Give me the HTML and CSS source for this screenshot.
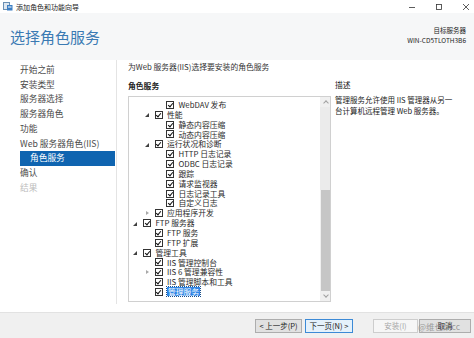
FILE: index.html
```html
<!DOCTYPE html>
<html lang="zh-CN">
<head>
<meta charset="utf-8">
<title>添加角色和功能向导</title>
<link rel="stylesheet" href="styles.css">
</head>
<body>
<div class="window">
  <div class="titlebar">
    <svg class="app-icon" width="10" height="9" viewBox="0 0 10 9">
      <rect x="0.5" y="0.5" width="6" height="7" fill="#dfe7ef" stroke="#6a8fb3"/>
      <rect x="4" y="3" width="5.5" height="5.5" fill="#3c7fc4"/>
      <rect x="5" y="4.5" width="3.5" height="1" fill="#fff"/>
    </svg>
    <span class="title">添加角色和功能向导</span>
    <div class="controls">
      <svg width="8" height="8" viewBox="0 0 8 8"><line x1="1" y1="4.5" x2="7" y2="4.5" stroke="#333" stroke-width="0.8"/></svg>
      <svg width="8" height="8" viewBox="0 0 8 8"><rect x="1.5" y="1.5" width="5" height="5" fill="none" stroke="#333" stroke-width="0.8"/></svg>
      <svg width="8" height="8" viewBox="0 0 8 8"><path d="M1 1 L7 7 M7 1 L1 7" stroke="#333" stroke-width="0.8"/></svg>
    </div>
  </div>

  <div class="header">
    <h1 class="heading">选择角色服务</h1>
    <div class="target">
      <div>目标服务器</div>
      <div>WIN-CD5TLOTH3B6</div>
    </div>
  </div>

  <div class="main">
    <nav class="nav">
      <div class="nav-item">开始之前</div>
      <div class="nav-item">安装类型</div>
      <div class="nav-item">服务器选择</div>
      <div class="nav-item">服务器角色</div>
      <div class="nav-item">功能</div>
      <div class="nav-item">Web 服务器角色(IIS)</div>
      <div class="nav-item sub active">角色服务</div>
      <div class="nav-item">确认</div>
      <div class="nav-item disabled">结果</div>
    </nav>

    <section class="content">
      <div class="subtitle">为Web 服务器(IIS)选择要安装的角色服务</div>
      <div class="section-label">角色服务</div>
      <div class="tree-box">
        <div class="tree">
          <div class="row l3"><span class="exp"></span><span class="cb"></span><span class="label">WebDAV 发布</span></div>
          <div class="row l2"><span class="exp open"></span><span class="cb"></span><span class="label">性能</span></div>
          <div class="row l3"><span class="exp"></span><span class="cb"></span><span class="label">静态内容压缩</span></div>
          <div class="row l3"><span class="exp"></span><span class="cb"></span><span class="label">动态内容压缩</span></div>
          <div class="row l2"><span class="exp open"></span><span class="cb"></span><span class="label">运行状况和诊断</span></div>
          <div class="row l3"><span class="exp"></span><span class="cb"></span><span class="label">HTTP 日志记录</span></div>
          <div class="row l3"><span class="exp"></span><span class="cb"></span><span class="label">ODBC 日志记录</span></div>
          <div class="row l3"><span class="exp"></span><span class="cb"></span><span class="label">跟踪</span></div>
          <div class="row l3"><span class="exp"></span><span class="cb"></span><span class="label">请求监视器</span></div>
          <div class="row l3"><span class="exp"></span><span class="cb"></span><span class="label">日志记录工具</span></div>
          <div class="row l3"><span class="exp"></span><span class="cb"></span><span class="label">自定义日志</span></div>
          <div class="row l2"><span class="exp closed"></span><span class="cb"></span><span class="label">应用程序开发</span></div>
          <div class="row l1"><span class="exp open"></span><span class="cb"></span><span class="label">FTP 服务器</span></div>
          <div class="row l2"><span class="exp"></span><span class="cb"></span><span class="label">FTP 服务</span></div>
          <div class="row l2"><span class="exp"></span><span class="cb"></span><span class="label">FTP 扩展</span></div>
          <div class="row l1"><span class="exp open"></span><span class="cb"></span><span class="label">管理工具</span></div>
          <div class="row l2"><span class="exp"></span><span class="cb"></span><span class="label">IIS 管理控制台</span></div>
          <div class="row l2"><span class="exp closed"></span><span class="cb"></span><span class="label">IIS 6 管理兼容性</span></div>
          <div class="row l2"><span class="exp"></span><span class="cb"></span><span class="label">IIS 管理脚本和工具</span></div>
          <div class="row l2"><span class="exp"></span><span class="cb"></span><span class="label selected">管理服务</span></div>
        </div>
        <div class="scrollbar">
          <div class="arrow up"></div>
          <div class="track"></div>
          <div class="thumb"></div>
          <div class="arrow down"></div>
        </div>
      </div>
    </section>

    <aside class="desc">
      <div class="desc-title">描述</div>
      <p class="desc-text">管理服务允许使用 IIS 管理器从另一台计算机远程管理 Web 服务器。</p>
    </aside>
  </div>

  <div class="footer">
    <button class="btn">&lt; 上一步(P)</button>
    <button class="btn primary">下一页(N) &gt;</button>
    <button class="btn disabled install">安装(I)</button>
    <button class="btn cancel">取消</button>
    <span class="watermark">@维也纳cc</span>
  </div>
</div>
</body>
</html>
```

FILE: styles.css
```css
* { box-sizing: border-box; }

html, body {
  margin: 0;
  padding: 0;
  width: 474px;
  height: 338px;
  overflow: hidden;
  background: #fff;
  font-family: "Noto Sans CJK SC", "Noto Sans", sans-serif;
  color: #2b2b2b;
}

.window {
  display: flex;
  flex-direction: column;
  width: 474px;
  height: 338px;
  position: relative;
}

/* title bar */
.titlebar {
  height: 13px;
  display: flex;
  align-items: center;
  background: #fff;
  padding-left: 3px;
}
.app-icon { flex: none; }
.title {
  font-size: 7px;
  line-height: 10px;
  margin-left: 3px;
  color: #222;
}
.controls {
  margin-left: auto;
  display: flex;
  gap: 19px;
  padding-right: 4px;
  padding-top: 1px;
}

/* header */
.header {
  height: 47px;
  background: #f6f7f8;
  display: flex;
  justify-content: space-between;
  padding: 0 8px 0 10px;
}
.heading {
  margin: 0;
  margin-top: 14px;
  font-size: 15px;
  line-height: 20px;
  font-weight: normal;
  color: #3a7ab3;
}
.target {
  margin-top: 12px;
  text-align: right;
  font-size: 6.5px;
  line-height: 10px;
  color: #222;
}

/* main */
.main {
  flex: 1;
  display: flex;
  min-height: 0;
}

.nav {
  width: 117px;
  flex: none;
  border-right: 1px solid #e4e4e4;
  padding-top: 3px;
  margin-bottom: 8px;
}
.nav-item {
  font-size: 8.7px;
  line-height: 14.7px;
  padding-left: 20px;
  color: #4a4a4a;
  white-space: nowrap;
}
.nav-item.sub {
  margin-left: 20px;
  padding-left: 10px;
}
.nav-item.active {
  background: #0f64b0;
  color: #fff;
  margin-right: 1px;
}
.nav-item.disabled { color: #bcbcbc; }

.content {
  width: 214px;
  flex: none;
  padding-left: 11px;
  display: flex;
  flex-direction: column;
}
.subtitle {
  font-size: 7.8px;
  line-height: 10px;
  margin-top: 2px;
  color: #333;
  white-space: nowrap;
}
.section-label {
  font-size: 7.8px;
  line-height: 10px;
  font-weight: bold;
  margin-top: 9px;
  color: #222;
}
.tree-box {
  margin-top: 5px;
  height: 206px;
  width: 203px;
  border: 1px solid #d0d0d0;
  background: #fff;
  display: flex;
}
.tree {
  flex: 1;
  padding-top: 3px;
  padding-left: 3px;
}
.row {
  display: flex;
  align-items: center;
  height: 9.85px;
  font-size: 7.8px;
  line-height: 9.85px;
  white-space: nowrap;
  color: #2a2a2a;
}
.row.l2 { padding-left: 11.5px; }
.row.l3 { padding-left: 23px; }

.exp {
  width: 11px;
  height: 9px;
  flex: none;
  position: relative;
}
.exp.open::before {
  content: "";
  position: absolute;
  left: 1px;
  top: 3px;
  border-style: solid;
  border-width: 0 0 4px 4px;
  border-color: transparent transparent #404040 transparent;
}
.exp.closed::before {
  content: "";
  position: absolute;
  left: 2px;
  top: 2.5px;
  width: 0;
  height: 0;
  border-style: solid;
  border-width: 2.5px 0 2.5px 3.5px;
  border-color: transparent transparent transparent #a8a8a8;
}
.cb {
  width: 8px;
  height: 8px;
  flex: none;
  border: 1px solid #333;
  background: #fff;
  position: relative;
  margin-right: 4.5px;
}
.cb::after {
  content: "";
  position: absolute;
  left: 1.8px;
  top: 0px;
  width: 2px;
  height: 4px;
  border-right: 1.2px solid #111;
  border-bottom: 1.2px solid #111;
  transform: rotate(40deg);
}
.label.selected {
  background: #2f86e6;
  color: #fff;
  padding: 0 1px;
  line-height: 9px;
  outline: 1px dotted #1a4f8a;
}

.scrollbar {
  width: 10px;
  flex: none;
  display: flex;
  flex-direction: column;
  background: #f0f0f0;
}
.arrow {
  height: 10px;
  flex: none;
  position: relative;
}
.arrow::before {
  content: "";
  position: absolute;
  left: 3.5px;
  width: 3px;
  height: 3px;
  border-left: 1px solid #a0a0a0;
  border-top: 1px solid #a0a0a0;
}
.arrow.up::before { top: 4px; transform: rotate(45deg); }
.arrow.down::before { top: 2px; transform: rotate(225deg); }
.track {
  height: 83px;
  flex: none;
  background: #ebebeb;
}
.thumb {
  flex: 1;
  background: #c6c6c6;
  margin: 0 0.5px;
}

.desc {
  flex: 1;
  padding-left: 4px;
  padding-right: 6px;
}
.desc-title {
  font-size: 7.8px;
  line-height: 10px;
  margin-top: 20px;
  color: #222;
}
.desc-text {
  margin: 4px 0 0;
  width: 121px;
  font-size: 7.5px;
  line-height: 11px;
  color: #222;
}

/* footer */
.footer {
  height: 26px;
  flex: none;
  background: #f0f0f0;
  border-top: 1px solid #e2e2e2;
  display: flex;
  align-items: flex-start;
  padding-top: 6px;
  padding-left: 255px;
  position: relative;
}
.btn {
  font-family: "Noto Sans CJK SC", "Noto Sans", sans-serif;
  font-size: 7.5px;
  height: 14px;
  width: 47px;
  padding: 0;
  line-height: 12px;
  border: 1px solid #adadad;
  background: #e1e1e1;
  color: #222;
}
.btn.primary {
  width: 48px;
  margin-left: 3px;
  border-color: #3c8ad6;
  background: #e5f1fb;
}
.btn.install {
  margin-left: 20px;
  width: 45px;
}
.btn.disabled {
  border-color: #cdcdcd;
  background: #f6f6f6;
  color: #a6a6a6;
}
.btn.cancel {
  width: 52px;
  margin-left: 1px;
}
.watermark {
  position: absolute;
  left: 418px;
  top: 8px;
  font-size: 8.5px;
  line-height: 10px;
  color: rgba(130, 130, 130, 0.75);
  white-space: nowrap;
}
```
